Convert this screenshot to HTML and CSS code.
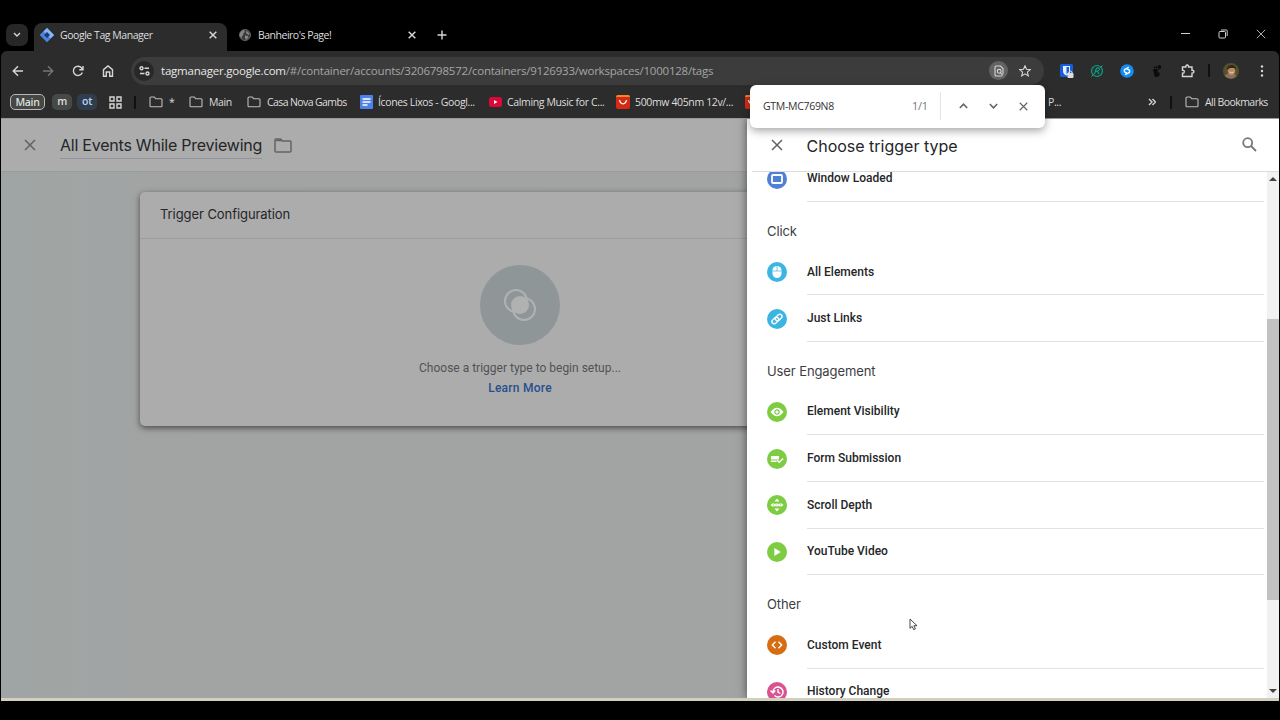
FILE: index.html
```html
<!DOCTYPE html>
<html lang="en">
<head>
  <meta charset="UTF-8" />
  <meta name="viewport" content="width=device-width, initial-scale=1.0" />
  <title>Google Tag Manager</title>
  <link rel="stylesheet" href="styles.css">
</head>
<body>
  <svg class="defs">
    <symbol id="folder" viewBox="0 0 14 12"><path d="M1 2.2Q1 1 2 1h3.2l1.5 1.7H12q1 0 1 1v6.1q0 1-1 1H2q-1 0-1-1z" /></symbol>
    <symbol id="close" viewBox="0 0 12 12"><path d="M1 1l10 10M11 1L1 11" /></symbol>
    <symbol id="ali" viewBox="0 0 14 14"><rect width="14" height="14" rx="2" fill="#d52b12" /><path d="M0 2Q0 0 2 0h10q2 0 2 2z" fill="#eb8a2b" /><path d="M3.5 5.2q.7 3.6 3.5 3.6t3.5-3.6" fill="none" stroke="#fff" stroke-width="1.3" /></symbol>
  </svg>

  <div class="browser">
    <div class="tabstrip">
      <button class="tab-search"><svg class="line" width="8" height="6" viewBox="0 0 8 6"><path d="M1 1l3 3 3-3" /></svg></button>
      <div class="tab active">
        <svg width="14" height="14" viewBox="0 0 14 14"><path d="M7 0l7 7-7 7-7-7z" fill="#669df6" /><path d="M7 0L3.5 3.5l7 7L14 7z" fill="#8ab4f8" /><path d="M0 7l3.5-3.5L10.500 10.500 7 14z" fill="#4c82dc" /><path d="M7 4l3 3-3 3-3-3z" fill="#173a72" /></svg>
        <span class="tab-title">Google Tag Manager</span>
        <svg class="line tab-close" width="8" height="8"><use href="#close" /></svg>
      </div>
      <div class="tab">
        <svg width="12" height="12" viewBox="0 0 12 12"><circle cx="6" cy="6" r="5.500" fill="#3a3a3a" stroke="#666" /><path d="M1 4q2-3 4-3l1 2-2 1.500.5 1.500L3 7v2Q0 8 1 4zM7.500 1.500l3 3-.5 1.500-2-1-1-1.500zM6 6.500l3 .5.500 1.500L7 11 6 9z" fill="#858585" /></svg>
        <span class="tab-title">Banheiro's Page!</span>
        <svg class="line tab-close" width="8" height="8"><use href="#close" /></svg>
      </div>
      <svg class="line new-tab" width="10" height="10" viewBox="0 0 10 10"><path d="M5 .5v9M.5 5h9" /></svg>
      <div class="window-buttons">
        <svg class="thin" width="10" height="10" viewBox="0 0 10 10"><path d="M1 4.500h9" /></svg>
        <svg class="thin" width="10" height="10" viewBox="0 0 10 10"><rect x="1" y="2.500" width="6.500" height="6.500" rx="1" /><path d="M3 1h5.500q.7 0 .7.7V7" /></svg>
        <svg class="thin" width="10" height="10" viewBox="0 0 12 12"><path d="M1 1l10 10M11 1L1 11" /></svg>
      </div>
    </div>

    <div class="toolbar">
      <div class="nav">
        <svg class="line" width="12" height="12" viewBox="0 0 12 12"><path d="M11 6H1.500M6 1.200L1.200 6 6 10.800" /></svg>
        <svg class="line dim" width="12" height="12" viewBox="0 0 12 12"><path d="M1 6h9.500M6 1.200L10.800 6 6 10.800" /></svg>
        <svg class="line" width="12" height="12" viewBox="0 0 12 12"><path d="M10.300 7.500A4.600 4.600 0 1 1 9.600 3L11 4.600M11 1v3.700H7.300" /></svg>
        <svg class="line" width="12" height="12" viewBox="0 0 12 12"><path d="M1.500 11.200V4.600L6 1l4.500 3.600v6.600H7.700V7H4.300v4.200z" /></svg>
      </div>
      <div class="address">
        <span class="site-info"><svg class="line" width="11" height="10" viewBox="0 0 11 10"><circle cx="2.500" cy="2.300" r="1.500" /><path d="M5.500 2.300H10M1 7.500h4.500" /><circle cx="8.500" cy="7.500" r="1.500" /></svg></span>
        <span class="url"><b>tagmanager.google.com</b>/#/container/accounts/3206798572/containers/9126933/workspaces/1000128/tags</span>
        <span class="find-chip"><svg class="line" width="10" height="12" viewBox="0 0 10 12"><path d="M9 9V3.500L6.500 1H2q-1 0-1 1v8q0 1 1 1h6" /><circle cx="5.200" cy="6.300" r="1.900" /><path d="M6.500 7.800L9 10.500" /></svg></span>
        <svg class="line star" width="12" height="12" viewBox="0 0 12 12"><path d="M6 .8l1.500 3.500 3.800.3-2.900 2.500.9 3.800L6 8.900l-3.300 2 .9-3.800L.7 4.600l3.800-.3z" /></svg>
      </div>
      <div class="extensions">
        <svg width="14" height="14" viewBox="0 0 14 14"><rect width="13" height="13" rx="1.500" fill="#175ddc" /><path d="M3 2h7v5q0 3-3.500 4.500Q3 10 3 7z" fill="#e8f0ff" /><path d="M6.500 3H9v4q0 2-2.500 3z" fill="#175ddc" /><rect x="7.500" y="9" width="6" height="5" rx="1" fill="#ddd" /><path d="M9 9V8q1.500-2 3 0v1" fill="none" stroke="#ddd" /></svg>
        <svg width="14" height="14" viewBox="0 0 14 14"><circle cx="7" cy="7" r="5.500" fill="#1c3d38" stroke="#169a83" stroke-width="1.200" /><path d="M1.500 12.500l2-2M10.500 3.500l2-2M4.500 10l2-6h2.500q1.500 1.800-1 3.200H6M7.500 7.200L9 10" fill="none" stroke="#23a58e" /></svg>
        <svg width="14" height="14" viewBox="0 0 14 14"><circle cx="7" cy="7" r="6.800" fill="#148cf5" /><path d="M8.800 3.300L5.300 5Q3.300 6.700 5.300 8.400l1.700.6M5.200 10.700l3.500-1.700q2-1.700 0-3.400L7 5" fill="none" stroke="#fff" stroke-width="1.400" /></svg>
        <svg width="14" height="14" viewBox="0 0 14 14"><path d="M3 5.500q2.500-1.500 6 0-2 1-1.500 2.500Q9 9 9.500 8.500q1 3-2.500 4.500-3 .3-3-3.500z" fill="#0b0b0b" /><ellipse cx="9.500" cy="3" rx="1.700" ry="2" fill="#0b0b0b" /><circle cx="6.500" cy="3" r="1" fill="#0b0b0b" /><circle cx="4.500" cy="3.500" r=".8" fill="#0b0b0b" /></svg>
        <svg class="line" width="14" height="14" viewBox="0 0 14 14"><path d="M1.500 3h3.300q0-2 1.400-2t1.400 2H11v3.300q2 0 2 1.400t-2 1.400v3.400H1.500V9.300q1.800 0 1.800-1.600T1.500 6.200z" /></svg>
        <i class="divider"></i>
        <svg width="16" height="16" viewBox="0 0 16 16"><circle cx="8" cy="8" r="8" fill="#55512c" /><path d="M1.500 13q2-3 6-3t6 3q-5 5.500-12 0z" fill="#85715d" /><ellipse cx="8.500" cy="7.500" rx="3.800" ry="4.800" fill="#b98a64" /><path d="M4 7q0-5 4.500-5T13 7l-2-2H7z" fill="#352719" /><path d="M6.500 9q2 1.500 4 0" stroke="#f0d8be" fill="none" /></svg>
        <svg width="4" height="14" viewBox="0 0 4 14"><g fill="#d8d8d8"><circle cx="2" cy="2.500" r="1.200" /><circle cx="2" cy="7" r="1.200" /><circle cx="2" cy="11.500" r="1.200" /></g></svg>
      </div>
    </div>

    <div class="bookmarks">
      <span class="group main">Main</span>
      <span class="group">m</span>
      <span class="group ot">ot</span>
      <svg class="line" width="13" height="13" viewBox="0 0 13 13"><path d="M1 1h4v4H1zM8 1h4v4H8zM1 8h4v4H1zM8 8h4v4H8z" /></svg>
      <i class="divider"></i>
      <span class="bookmark"><svg class="folder"><use href="#folder" /></svg>*</span>
      <span class="bookmark"><svg class="folder"><use href="#folder" /></svg>Main</span>
      <span class="bookmark"><svg class="folder"><use href="#folder" /></svg>Casa Nova Gambs</span>
      <span class="bookmark tight"><svg width="13" height="14" viewBox="0 0 13 14"><rect width="13" height="14" rx="1" fill="#4e82e8" /><path d="M2.500 4h8M2.500 7h8M2.500 10h5" stroke="#fff" stroke-width="1.400" /></svg>Ícones Lixos - Googl...</span>
      <span class="bookmark tight"><svg width="13" height="10" viewBox="0 0 13 10"><rect width="13" height="10" rx="2.500" fill="#dc0838" /><path d="M5 3l3.500 2L5 7z" fill="#fff" /></svg>Calming Music for C...</span>
      <span class="bookmark tight"><svg width="14" height="14"><use href="#ali" /></svg>500mw 405nm 12v/...</span>
      <span class="bookmark"><svg width="14" height="14"><use href="#ali" /></svg></span>
      <span class="bookmark">P...</span>
      <svg class="line" width="8" height="8" viewBox="0 0 8 8"><path d="M1 1l3 3-3 3M4.500 1l3 3-3 3" /></svg>
      <i class="divider"></i>
      <span class="bookmark"><svg class="folder"><use href="#folder" /></svg>All Bookmarks</span>
    </div>

    <main class="page">
      <header class="trigger-header">
        <svg class="grey" width="12" height="12"><use href="#close" /></svg>
        <h1>All Events While Previewing</h1>
        <svg class="grey" width="18" height="15" viewBox="0 0 18 15"><path d="M1 2q0-1 1-1h4.500L8.500 3H16q1 0 1 1v9q0 1-1 1H2q-1 0-1-1z" /><path d="M2 2.500h6" /></svg>
      </header>
      <section class="card">
        <h2>Trigger Configuration</h2>
        <div class="card-body">
          <div class="trigger-circle">
            <svg width="36" height="36" viewBox="0 0 36 36"><circle cx="14" cy="14" r="11" /><circle cx="22" cy="22" r="11" /><circle class="overlap" cx="18" cy="18" r="9" /></svg>
          </div>
          <p>Choose a trigger type to begin setup...</p>
          <a>Learn More</a>
        </div>
      </section>

      <aside class="panel">
        <header class="panel-header">
          <svg class="grey" width="12" height="12"><use href="#close" /></svg>
          <h2>Choose trigger type</h2>
          <svg class="grey search" width="15" height="15" viewBox="0 0 15 15"><circle cx="5.700" cy="5.700" r="4.500" /><path d="M9 9l5 5" /></svg>
        </header>
        <div class="panel-content">
          <div class="list">
            <div class="row"><span class="icon blue"><svg viewBox="0 0 20 20"><rect x="5" y="6" width="10" height="8" rx="1" class="stroke thick" /></svg></span><span class="name">Window Loaded</span></div>
            <h3>Click</h3>
            <div class="row"><span class="icon cyan"><svg viewBox="0 0 20 20"><rect x="5.500" y="4" width="9" height="12" rx="4.500" class="fill" /><path d="M10 4v5M5.500 9h9" stroke="#59bfe3" stroke-width=".8" /></svg></span><span class="name">All Elements</span></div>
            <div class="row"><span class="icon cyan"><svg viewBox="0 0 20 20"><g class="stroke" transform="rotate(-42 10 10)"><rect x="4" y="7.800" width="7.500" height="4.400" rx="2.200" /><rect x="8.500" y="7.800" width="7.500" height="4.400" rx="2.200" /></g></svg></span><span class="name">Just Links</span></div>
            <h3>User Engagement</h3>
            <div class="row"><span class="icon green"><svg viewBox="0 0 20 20"><path class="fill" d="M3.500 10Q10 1.500 16.500 10 10 18.500 3.500 10z" /><circle cx="10" cy="10" r="2.200" fill="none" stroke="#7dcc42" stroke-width="1.200" /></svg></span><span class="name">Element Visibility</span></div>
            <div class="row"><span class="icon green"><svg viewBox="0 0 20 20"><path class="fill" d="M4 7h8v3.500H4z" /><path class="stroke" d="M4 12.300h5.500M10 11.200l2.200 2 4-3.700" /></svg></span><span class="name">Form Submission</span></div>
            <div class="row"><span class="icon green"><svg viewBox="0 0 20 20"><path class="fill" d="M10 3.500L12.500 6.500h-5zM10 16.500L7.500 13.500h5zM3.500 10L6.500 7.800v4.400zM16.500 10l-3-2.200v4.400zM7 8.700h1.800v2.600H7zM9.200 8.500h1.600v3H9.200zM11.200 8.700H13v2.600h-1.800z" /></svg></span><span class="name">Scroll Depth</span></div>
            <div class="row"><span class="icon green"><svg viewBox="0 0 20 20"><path class="fill" d="M7.300 6l6.500 4-6.500 4z" /></svg></span><span class="name">YouTube Video</span></div>
            <h3>Other</h3>
            <div class="row"><span class="icon orange"><svg viewBox="0 0 20 20"><path class="stroke" d="M8.500 6.800L5.300 10l3.200 3.200M11.500 6.800l3.200 3.200-3.200 3.200" /></svg></span><span class="name">Custom Event</span></div>
            <div class="row"><span class="icon pink"><svg viewBox="0 0 20 20"><path class="stroke" d="M6 10a5 5 0 1 1 1.500 3.600M3.500 8.500L6 11l2.300-2.500M11 7v3.200l2.300 1.300" /></svg></span><span class="name">History Change</span></div>
          </div>
          <div class="scrollbar"><i class="arrow up"></i><i class="thumb"></i><i class="arrow down"></i></div>
        </div>
      </aside>
    </main>
  </div>

  <div class="findbar">
    <span class="query">GTM-MC769N8</span>
    <span class="count">1/1</span>
    <svg class="grey" width="9" height="6" viewBox="0 0 9 6"><path d="M.8 5l3.700-3.800L8.200 5" /></svg>
    <svg class="grey" width="9" height="6" viewBox="0 0 9 6"><path d="M.8 1l3.700 3.800L8.200 1" /></svg>
    <svg class="grey" width="9" height="9"><use href="#close" /></svg>
  </div>

  <svg class="cursor" width="9" height="13" viewBox="0 0 9 13"><path d="M1 1v9.300l2.200-1.900 1.500 3.300 1.700-.8-1.500-3.200H8z" /></svg>
</body>
</html>
```

FILE: styles.css
```css
* {
  box-sizing: border-box;
}

body {
  margin: 0;
  width: 1280px;
  height: 720px;
  overflow: hidden;
  background: #000;
  font-family: "Open Sans", "Noto Sans", sans-serif;
  font-size: 11px;
  color: #dedede;
}

h1, h2, h3, p {
  margin: 0;
  font-weight: 400;
}

svg {
  display: block;
  flex: none;
}

.defs {
  display: none;
}

.line, .folder {
  fill: none;
  stroke: #d6d6d6;
  stroke-width: 1.4;
}

.dim {
  stroke: #747474;
}

.thin {
  fill: none;
  stroke: #d0d0d0;
  stroke-width: 1;
}

.grey {
  fill: none;
  stroke: #606365;
  stroke-width: 1.5;
}

.divider {
  width: 2px;
  height: 13px;
  background: #111;
}

.browser {
  width: 1278px;
  margin-left: 1px;
}

/* Tabs */
.tabstrip {
  height: 51px;
  padding: 23px 0 0 5px;
  display: flex;
}

.tab-search {
  width: 22px;
  height: 22px;
  margin: 1px 6px 0 0;
  padding: 0;
  border: none;
  border-radius: 7px;
  background: #272727;
  display: flex;
  align-items: center;
  justify-content: center;
}

.tab {
  width: 193px;
  height: 28px;
  padding: 0 10px 4px 6px;
  border-radius: 8px 8px 0 0;
  display: flex;
  align-items: center;
  gap: 6px;
}

.tab + .tab {
  width: 200px;
  padding-left: 12px;
  gap: 7px;
}

.tab.active {
  background: #2c2c2c;
}

.tab-title {
  font-size: 10.5px;
  letter-spacing: -0.5px;
}

.active .tab-title {
  letter-spacing: -0.45px;
}

.tab-close {
  margin-left: auto;
  stroke-width: 2.2;
}

.tab + .tab .tab-close {
  margin-right: 1px;
}

.new-tab {
  margin: 7px 0 0 10px;
}

.window-buttons {
  margin: 6px 13px 0 auto;
  display: flex;
  gap: 28px;
}

/* Toolbar */
.toolbar {
  height: 36px;
  padding: 3px 0 0;
  display: flex;
  align-items: center;
  background: #2c2c2c;
  border-radius: 6px 6px 0 0;
}

.nav {
  width: 130px;
  padding-left: 11px;
  display: flex;
  gap: 18px;
}

.address {
  width: 913px;
  height: 28px;
  padding: 0 13px 0 3px;
  border-radius: 14px;
  background: #3c3c3c;
  display: flex;
  align-items: center;
}

.site-info {
  width: 20px;
  height: 20px;
  border-radius: 50%;
  background: #282828;
  display: flex;
  align-items: center;
  justify-content: center;
}

.url {
  margin-left: 7px;
  font-size: 11.5px;
  letter-spacing: -0.22px;
  color: #a5a5a5;
  white-space: nowrap;
}

.url b {
  font-weight: 400;
  color: #e8e8e8;
}

.find-chip {
  width: 19px;
  height: 19px;
  margin-left: auto;
  border-radius: 50%;
  background: #636363;
  display: flex;
  align-items: center;
  justify-content: center;
}

.find-chip svg {
  stroke-width: 1.1;
}

.star {
  margin: 0 0 0 11px;
  stroke-width: 1.1;
}

.extensions {
  flex: 1;
  padding-left: 16px;
  display: grid;
  grid-template-columns: 30px 30px 30px 31px 27px 15px 37px 4px;
  align-items: center;
}

/* Bookmarks */
.bookmarks {
  height: 31px;
  padding: 0 0 1px 9px;
  display: grid;
  grid-template-columns: 42px 25px 32px 25px 15px 40px 58px 113px 129px 127px 129px 303px 100px 22px 15px 1fr;
  align-items: center;
  background: #2c2c2c;
  letter-spacing: -0.36px;
}

.group {
  width: 20px;
  height: 16px;
  border-radius: 5px;
  background: #464946;
  font-size: 10.5px;
  font-weight: 600;
  line-height: 15px;
  text-align: center;
}

.group.main {
  width: 35px;
  line-height: 14px;
  border: 1px solid #b8b8b8;
  background: #454745;
}

.group.ot {
  background: #303d4c;
  color: #b8d3f5;
}

.bookmark {
  display: flex;
  align-items: center;
  gap: 6px;
  font-size: 10.5px;
  white-space: nowrap;
}

.bookmark:nth-child(8) {
  letter-spacing: -0.6px;
}

.bookmark:last-child {
  letter-spacing: -0.55px;
}

.bookmark.tight {
  gap: 5px;
}

.folder {
  width: 14px;
  height: 12px;
  stroke: #bdbdbd;
  stroke-width: 1.1;
}

/* Page under the dimmed backdrop */
.page {
  position: relative;
  height: 583px;
  overflow: hidden;
  background: linear-gradient(90deg, #9fa5a4, #a2a4a4 12%, #a2a3a3 55%);
  border-top: 1px solid #999;
  border-bottom: 3px solid #d2cfbf;
  font-family: Inter, Roboto, sans-serif;
  color: #242628;
}

.trigger-header {
  height: 53px;
  padding: 0 23px;
  display: flex;
  align-items: center;
  background: #acacac;
  border-bottom: 1px solid #999c9d;
}

.trigger-header h1 {
  height: 27px;
  margin: 1px 12px 0 24px;
  border-bottom: 1px solid #8f939b;
  font-size: 16px;
  line-height: 26px;
  letter-spacing: -0.23px;
}

.card {
  width: 760px;
  height: 234px;
  margin: 20px 0 0 139px;
  border-radius: 5px;
  background: #acacac;
  box-shadow: 0 2px 6px rgba(0, 0, 0, 0.55);
}

.card h2 {
  height: 47px;
  padding-left: 20px;
  border-bottom: 1px solid #9b9d9e;
  font-size: 13px;
  line-height: 45px;
  letter-spacing: -0.07px;
}

.card-body {
  padding-top: 26px;
  display: flex;
  flex-direction: column;
  align-items: center;
  font-family: Roboto, sans-serif;
}

.trigger-circle {
  width: 80px;
  height: 80px;
  border-radius: 50%;
  background: #8f9698;
  display: flex;
  align-items: center;
  justify-content: center;
}

.trigger-circle svg {
  fill: none;
  stroke: #b0b2b2;
  stroke-width: 2;
}

.trigger-circle .overlap {
  fill: #b0b2b2;
  stroke: none;
}

.card-body p {
  margin-top: 13px;
  font-size: 12px;
  line-height: 20px;
  color: #515355;
}

.card-body a {
  font-size: 12px;
  font-weight: 500;
  line-height: 20px;
  letter-spacing: 0.25px;
  color: #28508e;
}

/* Trigger type panel */
.panel {
  position: absolute;
  top: 0;
  right: 0;
  width: 532px;
  height: 579px;
  background: #fff;
  box-shadow: 0 0 9px rgba(0, 0, 0, 0.55);
}

.panel-header {
  height: 53px;
  margin-left: 5px;
  padding: 0 22px 0 18.5px;
  display: flex;
  align-items: center;
  border-bottom: 1px solid #dadcde;
}

.panel-header h2 {
  margin: 2px 0 0 24px;
  font-size: 16px;
}

.search {
  margin: -2px 0 0 auto;
  stroke: #777;
  stroke-width: 1.8;
}

.panel-content {
  height: 526px;
  overflow: hidden;
  display: flex;
}

.list {
  width: 517px;
  margin-top: -16.7px;
  padding-left: 20px;
}

.list h3 {
  height: 46.67px;
  padding-top: 6px;
  font-size: 13px;
  line-height: 46px;
  letter-spacing: -0.1px;
  color: #3c4043;
}

.row {
  height: 46.67px;
  display: flex;
  align-items: center;
  gap: 20px;
}

.icon {
  width: 20px;
  height: 20px;
  border-radius: 50%;
}

.icon.blue { background: #4f80d6; }
.icon.cyan { background: #3cb5e3; }
.icon.green { background: #7dcc42; }
.icon.orange { background: #d66d13; }
.icon.pink { background: #d9538f; }

.icon .fill { fill: #fff; }

.icon .stroke {
  fill: none;
  stroke: #fff;
  stroke-width: 1.4;
}

.icon .thick {
  stroke-width: 1.8;
}

.name {
  flex: 1;
  height: 46.67px;
  padding-top: 16.9px;
  border-bottom: 1px solid #e1e2e3;
  font-family: Roboto, sans-serif;
  font-size: 12px;
  font-weight: 500;
  line-height: 12px;
}

.scrollbar {
  width: 12px;
  margin-left: 3px;
  padding: 5px 0;
  display: flex;
  flex-direction: column;
  align-items: center;
  background: #f1f1f1;
}

.arrow {
  border: 4px solid transparent;
  border-top-width: 0;
  border-bottom: 4px solid #444;
}

.arrow.down {
  margin-top: auto;
  border-top: 4px solid #444;
  border-bottom-width: 0;
}

.thumb {
  width: 12px;
  height: 281px;
  margin-top: 138px;
  background: #c1c1c1;
}

/* Find in page */
.findbar {
  position: absolute;
  left: 750px;
  top: 85px;
  width: 295px;
  height: 43px;
  padding: 0 0 1px 13px;
  border-radius: 6px;
  background: #fff;
  box-shadow: 0 3px 8px rgba(0, 0, 0, 0.35);
  display: grid;
  grid-template-columns: 149px 47px 30px 30px 9px;
  align-items: center;
  color: #333;
}

.query {
  font-size: 10.5px;
  letter-spacing: -0.3px;
}

.count {
  width: 29px;
  height: 28px;
  border-right: 1px solid #e5e5e5;
  line-height: 28px;
  letter-spacing: -0.3px;
  color: #777;
}

.cursor {
  position: absolute;
  left: 909px;
  top: 618px;
  fill: #fff;
  stroke: #333;
  stroke-width: 0.9;
}
```
